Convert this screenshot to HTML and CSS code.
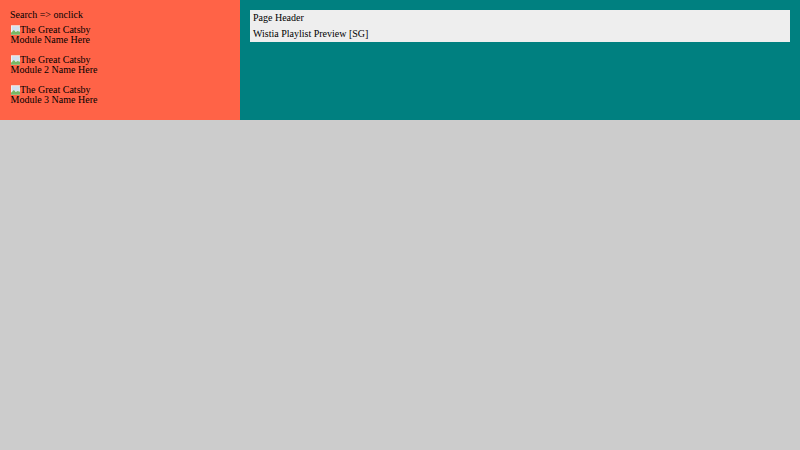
FILE: index.html
```html
<!DOCTYPE html>
<html lang="en">
<head>
<meta charset="utf-8">
<title>Playlist</title>
<link rel="stylesheet" href="styles.css">
</head>
<body>
<div class="top">
  <aside class="side">
    <div class="search">Search =&gt; onclick</div>
    <div class="module">
      <div class="thumb"><svg class="broken" viewBox="0 0 10 10"><path d="M0 0h10v10H0z" fill="#f3f1ee"/><path d="M1 1h8v5H1z" fill="#d4e2f2"/><path d="M0 10V8l3-3 2 2 2-1 3 1v3z" fill="#79b765"/></svg><span>The Great Catsby</span></div>
      <div class="name">Module Name Here</div>
    </div>
    <div class="module">
      <div class="thumb"><svg class="broken" viewBox="0 0 10 10"><path d="M0 0h10v10H0z" fill="#f3f1ee"/><path d="M1 1h8v5H1z" fill="#d4e2f2"/><path d="M0 10V8l3-3 2 2 2-1 3 1v3z" fill="#79b765"/></svg><span>The Great Catsby</span></div>
      <div class="name">Module 2 Name Here</div>
    </div>
    <div class="module">
      <div class="thumb"><svg class="broken" viewBox="0 0 10 10"><path d="M0 0h10v10H0z" fill="#f3f1ee"/><path d="M1 1h8v5H1z" fill="#d4e2f2"/><path d="M0 10V8l3-3 2 2 2-1 3 1v3z" fill="#79b765"/></svg><span>The Great Catsby</span></div>
      <div class="name">Module 3 Name Here</div>
    </div>
  </aside>
  <main class="content">
    <div class="panel">
      <div class="row">Page Header</div>
      <div class="row">Wistia Playlist Preview [SG]</div>
    </div>
  </main>
</div>
</body>
</html>
```
FILE: styles.css
```css
html, body {
  margin: 0;
  height: 100%;
}
body {
  background: #ccc;
  color: #000;
  font-family: "Liberation Serif", "Times New Roman", serif;
  font-size: 10px;
}
.top {
  display: flex;
  height: 120px;
}
.side {
  box-sizing: border-box;
  width: 240px;
  background: #ff6347;
  padding: 10px;
}
.search {
  height: 15px;
  line-height: 10px;
}
.module {
  display: flow-root;
  margin-left: 0.5px;
  margin-bottom: 10px;
  line-height: 10px;
}
.thumb {
  height: 10px;
  display: flex;
}
.broken {
  flex: none;
  width: 9.5px;
  height: 10px;
}
.content {
  flex: 1;
  box-sizing: border-box;
  background: #008080;
  padding: 10px;
}
.panel {
  background: #eee;
}
.row {
  height: 16px;
  line-height: 16px;
  padding-left: 3px;
}
```
